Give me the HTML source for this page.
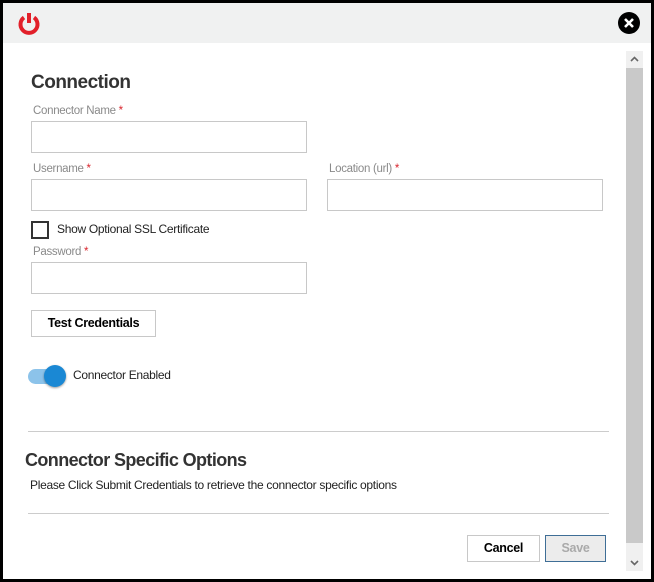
<!DOCTYPE html>
<html><head><style>
*{box-sizing:border-box;margin:0;padding:0}
body{width:654px;height:582px;background:#000;font-family:"Liberation Sans",sans-serif;position:relative;overflow:hidden}
.win{position:absolute;left:3px;top:3px;width:648px;height:576px;background:#fff}
.hdr{position:absolute;left:0;top:0;width:648px;height:40px;background:#f0f1f1}
.a{position:absolute;white-space:nowrap}
.lbl{font-size:11.5px;color:#8a8a8a;letter-spacing:-0.3px}
.lbl b{color:#d9262e;font-weight:normal}
.inp{position:absolute;border:1px solid #c8c8c8;background:#fff;height:32px}
.sb{position:absolute;left:623px;top:48px;width:17px;height:520px;background:#f0f0f0}
.th{position:absolute;left:623px;top:65px;width:17px;height:475px;background:#c9c9c9}
.btn{position:absolute;border:1px solid #c8c8c8;background:#fff;font-weight:bold;font-size:12.5px;text-align:center;letter-spacing:-0.3px}
</style></head><body>
<div class="win">
<div class="hdr"></div>
<svg class="a" style="left:14px;top:9px" width="24" height="24" viewBox="0 0 24 24"><path d="M7 5.5A8.5 8.5 0 1 0 17 5.5" fill="none" stroke="#e2202a" stroke-width="4"/><line x1="12" y1="1" x2="12" y2="11" stroke="#e2202a" stroke-width="4"/></svg>
<svg class="a" style="left:615px;top:9px" width="22" height="22" viewBox="0 0 22 22"><circle cx="11" cy="11" r="11" fill="#000"/><path d="M7 7L15 15M15 7L7 15" stroke="#fff" stroke-width="2.6"/></svg>
<div class="sb"></div><div class="th"></div>
<svg class="a" style="left:627px;top:53px" width="9" height="6" viewBox="0 0 9 6"><path d="M1 5L4.5 1.5L8 5" fill="none" stroke="#666" stroke-width="1.6"/></svg>
<svg class="a" style="left:627px;top:557px" width="9" height="6" viewBox="0 0 9 6"><path d="M1 1L4.5 4.5L8 1" fill="none" stroke="#666" stroke-width="1.6"/></svg>
<div class="a" style="left:28px;top:69px;font-size:19px;font-weight:bold;color:#333;letter-spacing:-0.5px">Connection</div>
<div class="a lbl" style="left:30px;top:102px">Connector Name <b>*</b></div>
<div class="inp" style="left:28px;top:118px;width:276px"></div>
<div class="a lbl" style="left:30px;top:160px">Username <b>*</b></div>
<div class="inp" style="left:28px;top:176px;width:276px"></div>
<div class="a lbl" style="left:326px;top:160px">Location (url) <b>*</b></div>
<div class="inp" style="left:324px;top:176px;width:276px"></div>
<div class="a" style="left:28px;top:218px;width:18px;height:18px;border:2px solid #333"></div>
<div class="a" style="left:54px;top:219px;font-size:12px;color:#222;letter-spacing:-0.3px">Show Optional SSL Certificate</div>
<div class="a lbl" style="left:30px;top:243px">Password <b>*</b></div>
<div class="inp" style="left:28px;top:259px;width:276px"></div>
<div class="btn" style="left:28px;top:307px;width:125px;height:27px;line-height:25px">Test Credentials</div>
<div class="a" style="left:25px;top:366px;width:34px;height:15px;border-radius:8px;background:#8cc3ea"></div>
<div class="a" style="left:41px;top:362px;width:22px;height:22px;border-radius:50%;background:#1a88d4;box-shadow:0 1px 2px rgba(0,0,0,.4)"></div>
<div class="a" style="left:70px;top:365px;font-size:12px;color:#222;letter-spacing:-0.3px">Connector Enabled</div>
<div class="a" style="left:25px;top:428px;width:581px;height:1px;background:#ccc"></div>
<div class="a" style="left:22px;top:447px;font-size:18px;font-weight:bold;color:#333;letter-spacing:-0.6px">Connector Specific Options</div>
<div class="a" style="left:27px;top:475px;font-size:12px;color:#222;letter-spacing:-0.3px">Please Click Submit Credentials to retrieve the connector specific options</div>
<div class="a" style="left:25px;top:510px;width:581px;height:1px;background:#ccc"></div>
<div class="btn" style="left:464px;top:532px;width:73px;height:27px;line-height:25px">Cancel</div>
<div class="btn" style="left:542px;top:532px;width:61px;height:27px;line-height:25px;background:#ececec;border-color:#3f6e96;color:#aaa">Save</div>
</div>
</body></html>
